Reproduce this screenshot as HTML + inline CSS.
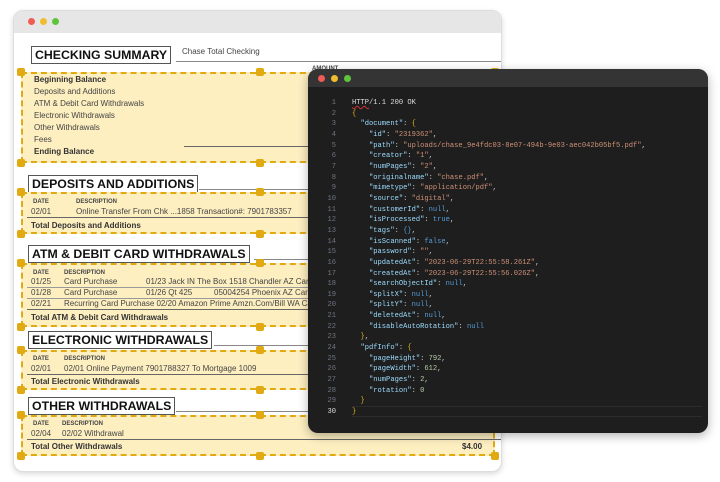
<!DOCTYPE html>
<html><head><meta charset="utf-8"><style>
*{margin:0;padding:0;box-sizing:border-box}
body{width:720px;height:482px;background:#fff;position:relative;overflow:hidden;font-family:"Liberation Sans",Arial,sans-serif}
.win{position:absolute;left:13px;top:10px;width:489px;height:462px;border-radius:10px;background:#fff;border:1px solid #ddd;box-shadow:0 2px 6px rgba(0,0,0,.15);overflow:hidden}
.tb{height:22px;background:#e6e6e6}
.dot{position:absolute;width:7px;height:7px;border-radius:50%}
.a{position:absolute;white-space:nowrap}
.h{position:absolute;border:1px solid #555;background:#fff;font-weight:bold;font-size:12.3px;padding:0 3px;line-height:16px;color:#111}
.box{position:absolute;left:7px;width:474px;background:#fdefc0;border:2px dashed #e2aa12}
.hd{position:absolute;width:8px;height:8px;border-radius:2px;background:#e2aa12}
.t{font-size:8px;color:#444}
.b{font-weight:bold;color:#333}
.s{font-size:6px;font-weight:bold;color:#444}
.ln{position:absolute;height:1px;background:#666}
.code{position:absolute;left:308px;top:69px;width:400px;height:364px;background:#1e1e1e;border-radius:10px;box-shadow:0 3px 10px rgba(0,0,0,.3);overflow:hidden;font-family:"Liberation Mono",monospace;font-size:7.1px}
.ctb{height:18px;background:#343434}
.nums{position:absolute;left:12px;top:29px;width:16px;text-align:right;color:#6e7681;line-height:10.65px}
.src{position:absolute;left:44px;top:29px;line-height:10.65px;color:#ccc;white-space:pre}
.k{color:#9cdcfe}.s2{color:#ce9178}.n{color:#569cd6}.m{color:#b5cea8}.y{color:#e2b714}
</style></head><body>
<div class="win"><div class="tb"></div>
<div class="dot" style="left:14px;top:7px;background:#ee5c55"></div>
<div class="dot" style="left:26px;top:7px;background:#f0bd2e"></div>
<div class="dot" style="left:38px;top:7px;background:#5fc43c"></div>

<div class="h" style="left:17px;top:35px;height:18px;line-height:17px">CHECKING SUMMARY</div>
<div class="a t" style="left:168px;top:36px;font-size:8px">Chase Total Checking</div>
<div class="ln" style="left:162px;top:50px;width:330px;background:#888"></div>
<div class="a s" style="left:298px;top:55px">AMOUNT</div>
<div class="box" style="top:61px;height:91px"></div>
<div class="a t b" style="left:20px;top:64px">Beginning Balance</div>
<div class="a t" style="left:20px;top:76px">Deposits and Additions</div>
<div class="a t" style="left:20px;top:88px">ATM &amp; Debit Card Withdrawals</div>
<div class="a t" style="left:20px;top:100px">Electronic Withdrawals</div>
<div class="a t" style="left:20px;top:112px">Other Withdrawals</div>
<div class="a t" style="left:20px;top:124px">Fees</div>
<div class="ln" style="left:170px;top:135px;width:320px"></div>
<div class="a t b" style="left:20px;top:136px">Ending Balance</div>

<div class="h" style="left:14px;top:164px">DEPOSITS AND ADDITIONS</div>
<div class="ln" style="left:185px;top:178px;width:305px;background:#888"></div>
<div class="box" style="top:181px;height:42px"></div>
<div class="a s" style="left:19px;top:188px">DATE</div><div class="a s" style="left:62px;top:188px">DESCRIPTION</div>
<div class="a t" style="left:17px;top:196px">02/01</div><div class="a t" style="left:62px;top:196px">Online Transfer From Chk ...1858 Transaction#: 7901783357</div>
<div class="ln" style="left:13px;top:206px;width:477px"></div>
<div class="a t b" style="left:17px;top:210px">Total Deposits and Additions</div>

<div class="h" style="left:14px;top:234px">ATM &amp; DEBIT CARD WITHDRAWALS</div>
<div class="ln" style="left:240px;top:248px;width:250px;background:#888"></div>
<div class="box" style="top:252px;height:64px"></div>
<div class="a s" style="left:19px;top:259px">DATE</div><div class="a s" style="left:50px;top:259px">DESCRIPTION</div>
<div class="a t" style="left:17px;top:266px">01/25</div><div class="a t" style="left:50px;top:266px">Card Purchase</div><div class="a t" style="left:132px;top:266px">01/23 Jack IN The Box 1518 Chandler AZ Card</div>
<div class="ln" style="left:13px;top:276px;width:477px;background:#999"></div>
<div class="a t" style="left:17px;top:277px">01/28</div><div class="a t" style="left:50px;top:277px">Card Purchase</div><div class="a t" style="left:132px;top:277px">01/26 Qt 425</div><div class="a t" style="left:200px;top:277px">05004254 Phoenix AZ Card</div>
<div class="ln" style="left:13px;top:287px;width:477px;background:#999"></div>
<div class="a t" style="left:17px;top:288px">02/21</div><div class="a t" style="left:50px;top:288px">Recurring Card Purchase 02/20 Amazon Prime Amzn.Com/Bill WA Card</div>
<div class="ln" style="left:13px;top:298px;width:477px"></div>
<div class="a t b" style="left:17px;top:302px">Total ATM &amp; Debit Card Withdrawals</div>

<div class="h" style="left:14px;top:320px">ELECTRONIC WITHDRAWALS</div>
<div class="ln" style="left:200px;top:334px;width:290px;background:#888"></div>
<div class="box" style="top:339px;height:40px"></div>
<div class="a s" style="left:19px;top:345px">DATE</div><div class="a s" style="left:50px;top:345px">DESCRIPTION</div>
<div class="a t" style="left:17px;top:353px">02/01</div><div class="a t" style="left:50px;top:353px">02/01 Online Payment 7901788327 To Mortgage 1009</div>
<div class="ln" style="left:13px;top:363px;width:477px"></div>
<div class="a t b" style="left:17px;top:366px">Total Electronic Withdrawals</div>

<div class="h" style="left:14px;top:386px">OTHER WITHDRAWALS</div>
<div class="ln" style="left:162px;top:400px;width:328px;background:#888"></div>
<div class="box" style="top:404px;height:41px"></div>
<div class="a s" style="left:19px;top:410px">DATE</div><div class="a s" style="left:48px;top:410px">DESCRIPTION</div>
<div class="a t" style="left:17px;top:418px">02/04</div><div class="a t" style="left:48px;top:418px">02/02 Withdrawal</div>
<div class="ln" style="left:13px;top:428px;width:477px"></div>
<div class="a t b" style="left:17px;top:431px">Total Other Withdrawals</div>
<div class="a t b" style="left:448px;top:431px">$4.00</div>

<div class="hd" style="left:3px;top:57px"></div><div class="hd" style="left:242px;top:57px"></div><div class="hd" style="left:477px;top:57px"></div>
<div class="hd" style="left:3px;top:148px"></div><div class="hd" style="left:242px;top:148px"></div>
<div class="hd" style="left:3px;top:177px"></div><div class="hd" style="left:242px;top:177px"></div>
<div class="hd" style="left:3px;top:219px"></div><div class="hd" style="left:242px;top:219px"></div>
<div class="hd" style="left:3px;top:248px"></div><div class="hd" style="left:242px;top:248px"></div>
<div class="hd" style="left:3px;top:312px"></div><div class="hd" style="left:242px;top:312px"></div>
<div class="hd" style="left:3px;top:335px"></div><div class="hd" style="left:242px;top:335px"></div>
<div class="hd" style="left:3px;top:375px"></div><div class="hd" style="left:242px;top:375px"></div>
<div class="hd" style="left:3px;top:400px"></div><div class="hd" style="left:242px;top:400px"></div>
<div class="hd" style="left:3px;top:441px"></div><div class="hd" style="left:242px;top:441px"></div><div class="hd" style="left:477px;top:441px"></div>
</div>

<div class="code"><div class="ctb"></div>
<div class="dot" style="left:10px;top:6px;background:#ee5c55"></div>
<div class="dot" style="left:23px;top:6px;background:#f0bd2e"></div>
<div class="dot" style="left:36px;top:6px;background:#5fc43c"></div>
<div class="nums">1<br>2<br>3<br>4<br>5<br>6<br>7<br>8<br>9<br>10<br>11<br>12<br>13<br>14<br>15<br>16<br>17<br>18<br>19<br>20<br>21<br>22<br>23<br>24<br>25<br>26<br>27<br>28<br>29<br><span style="color:#ddd">30</span></div>
<div class="src"><span style="color:#ddd;text-decoration:underline wavy #c33">HTTP</span><span style="color:#ddd">/1.1 200 OK</span>
<span class="y">{</span>
  <span class="k">"document"</span>: <span class="y">{</span>
    <span class="k">"id"</span>: <span class="s2">"2319362"</span>,
    <span class="k">"path"</span>: <span class="s2">"uploads/chase_9e4fdc03-8e07-494b-9e03-aec042b05bf5.pdf"</span>,
    <span class="k">"creator"</span>: <span class="s2">"1"</span>,
    <span class="k">"numPages"</span>: <span class="s2">"2"</span>,
    <span class="k">"originalname"</span>: <span class="s2">"chase.pdf"</span>,
    <span class="k">"mimetype"</span>: <span class="s2">"application/pdf"</span>,
    <span class="k">"source"</span>: <span class="s2">"digital"</span>,
    <span class="k">"customerId"</span>: <span class="n">null</span>,
    <span class="k">"isProcessed"</span>: <span class="n">true</span>,
    <span class="k">"tags"</span>: <span class="n">{}</span>,
    <span class="k">"isScanned"</span>: <span class="n">false</span>,
    <span class="k">"password"</span>: <span class="s2">""</span>,
    <span class="k">"updatedAt"</span>: <span class="s2">"2023-06-29T22:55:58.261Z"</span>,
    <span class="k">"createdAt"</span>: <span class="s2">"2023-06-29T22:55:56.026Z"</span>,
    <span class="k">"searchObjectId"</span>: <span class="n">null</span>,
    <span class="k">"splitX"</span>: <span class="n">null</span>,
    <span class="k">"splitY"</span>: <span class="n">null</span>,
    <span class="k">"deletedAt"</span>: <span class="n">null</span>,
    <span class="k">"disableAutoRotation"</span>: <span class="n">null</span>
  <span class="y">}</span>,
  <span class="k">"pdfInfo"</span>: <span class="y">{</span>
    <span class="k">"pageHeight"</span>: <span class="m">792</span>,
    <span class="k">"pageWidth"</span>: <span class="m">612</span>,
    <span class="k">"numPages"</span>: <span class="m">2</span>,
    <span class="k">"rotation"</span>: <span class="m">0</span>
  <span class="y">}</span>
<span class="y">}</span></div>
<div style="position:absolute;left:44px;top:337px;width:350px;height:11px;border-top:1px solid #2c2c2c;border-bottom:1px solid #2c2c2c"></div>
</div>
</body></html>
